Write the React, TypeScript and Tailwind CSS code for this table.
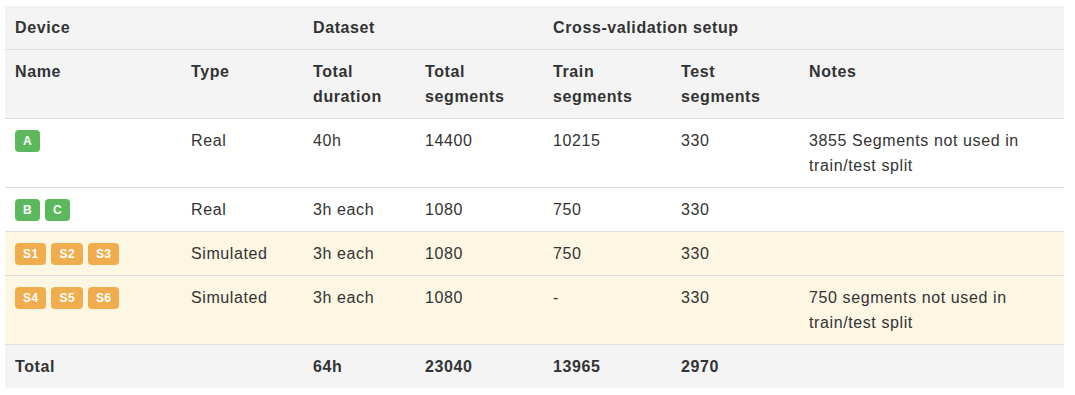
import React from 'react'

type Row = {
  badges: string[]
  color: 'green' | 'orange'
  type: string
  duration: string
  total: string
  train: string
  test: string
  notes?: string
  warn?: boolean
}

const rows: Row[] = [
  { badges: ['A'], color: 'green', type: 'Real', duration: '40h', total: '14400', train: '10215', test: '330', notes: '3855 Segments not used in train/test split' },
  { badges: ['B', 'C'], color: 'green', type: 'Real', duration: '3h each', total: '1080', train: '750', test: '330' },
  { badges: ['S1', 'S2', 'S3'], color: 'orange', type: 'Simulated', duration: '3h each', total: '1080', train: '750', test: '330', warn: true },
  { badges: ['S4', 'S5', 'S6'], color: 'orange', type: 'Simulated', duration: '3h each', total: '1080', train: '-', test: '330', notes: '750 segments not used in train/test split', warn: true },
]

function Badge({ label, color }: { label: string; color: 'green' | 'orange' }) {
  return (
    <span
      className={
        'flex h-[22px] items-center rounded-[4px] px-[8px] text-[12px] font-bold leading-none tracking-[0.4px] text-white ' +
        (color === 'green' ? 'bg-[#5cb85c]' : 'bg-[#f0ad4e]')
      }
    >
      {label}
    </span>
  )
}

export default function App() {
  const th = 'px-[10px] py-[9px] text-left align-top font-bold'
  const td = 'px-[10px] py-[9px] align-top'
  return (
    <div className="bg-white px-[5px] pt-[6px] pb-[8px] font-['Liberation_Sans',Arial,sans-serif] text-[16px] leading-[25px] tracking-[0.6px] text-[#333]">
      <table className="w-[1059px] table-fixed border-collapse">
        <colgroup>
          <col className="w-[176px]" />
          <col className="w-[122px]" />
          <col className="w-[112px]" />
          <col className="w-[128px]" />
          <col className="w-[128px]" />
          <col className="w-[128px]" />
          <col />
        </colgroup>
        <thead className="bg-[#f4f4f4]">
          <tr>
            <th className={th} colSpan={2}>Device</th>
            <th className={th} colSpan={2}>Dataset</th>
            <th className={th} colSpan={3}>Cross-validation setup</th>
          </tr>
          <tr className="border-t border-[#ddd]">
            <th className={th}>Name</th>
            <th className={th}>Type</th>
            <th className={th}>Total duration</th>
            <th className={th}>Total segments</th>
            <th className={th}>Train segments</th>
            <th className={th}>Test segments</th>
            <th className={th}>Notes</th>
          </tr>
        </thead>
        <tbody>
          {rows.map((r, i) => (
            <tr key={i} className={'border-t border-[#ddd] ' + (r.warn ? 'bg-[#fcf6e3]' : 'bg-white')}>
              <td className={td}>
                <div className="flex h-[25px] items-center gap-[5px]">
                  {r.badges.map(b => <Badge key={b} label={b} color={r.color} />)}
                </div>
              </td>
              <td className={td}>{r.type}</td>
              <td className={td}>{r.duration}</td>
              <td className={td}>{r.total}</td>
              <td className={td}>{r.train}</td>
              <td className={td}>{r.test}</td>
              <td className={td}>{r.notes}</td>
            </tr>
          ))}
          <tr className="border-t border-[#ddd] bg-[#f4f4f4] font-bold">
            <td className={td}>Total</td>
            <td className={td}></td>
            <td className={td}>64h</td>
            <td className={td}>23040</td>
            <td className={td}>13965</td>
            <td className={td}>2970</td>
            <td className={td}></td>
          </tr>
        </tbody>
      </table>
    </div>
  )
}
